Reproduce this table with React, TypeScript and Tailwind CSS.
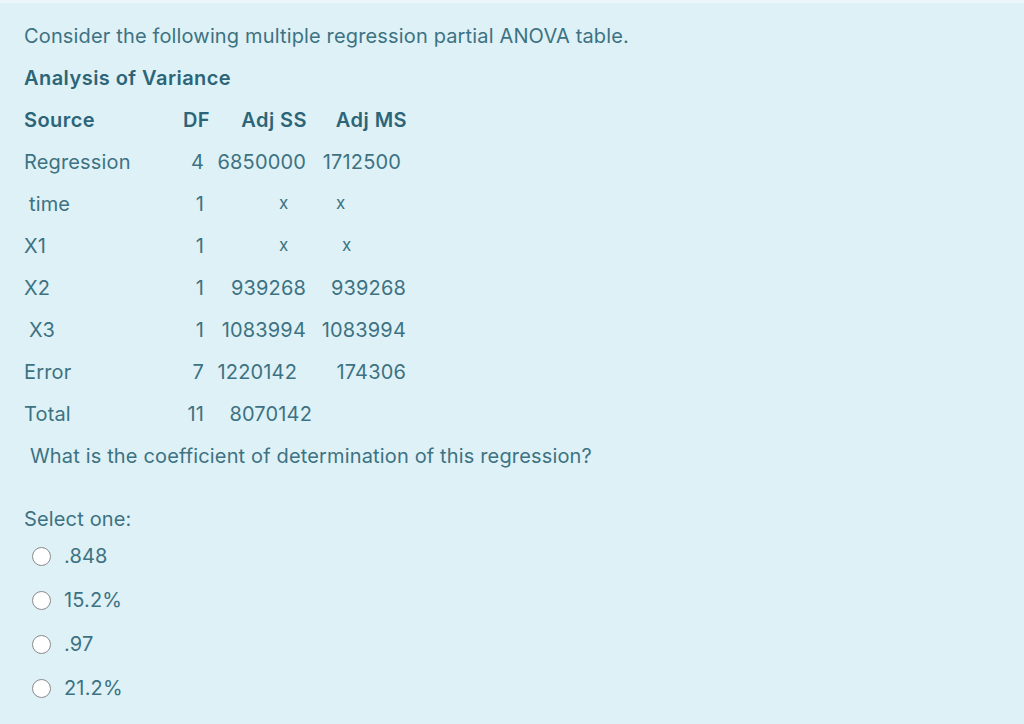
import React from "react";

const Radio = ({ label }: { label: string }) => (
  <div className="flex h-[44px] items-center">
    <span className="ml-[32px] h-[19px] w-[19px] rounded-full border-[1.5px] border-[#8a8a8a] bg-white" />
    <span className="ml-[13px]">{label}</span>
  </div>
);

export default function App() {
  const cell = "flex h-[42px] items-center";
  const bold = " font-semibold tracking-[0.45px] text-[#2c6577]";
  return (
    <div
      className="min-h-[724px] w-[1024px] bg-[#def1f7] text-[20px] tracking-[0.15px] text-[#3d7282]"
      style={{ fontFamily: "Inter, 'Liberation Sans', sans-serif" }}
    >
      <div className="h-[3px] bg-[#eaf6fa]" />
      <div className="pl-[24px] pt-[12px]">
        <div className={cell}>Consider the following multiple regression partial ANOVA table.</div>
        <div className={cell + bold}>Analysis of Variance</div>
        <div className="grid grid-cols-[156px_30px_100px_100px]">
          <div className={cell + bold}>Source</div>
          <div className={cell + " justify-end" + bold}>DF</div>
          <div className={cell + " justify-end pr-[3px]" + bold}>Adj SS</div>
          <div className={cell + " justify-end pr-[3px]" + bold}>Adj MS</div>

          <div className={cell}>Regression</div>
          <div className={cell + " justify-end pr-[6px]"}>4</div>
          <div className={cell + " justify-end pr-[4px]"}>6850000</div>
          <div className={cell + " justify-end pr-[9px]"}>1712500</div>

          <div className={cell + " pl-[5px]"}>time</div>
          <div className={cell + " justify-end pr-[6px]"}>1</div>
          <div className={cell + " pl-[69px] text-[17px]"}>x</div>
          <div className={cell + " pl-[26px] text-[17px]"}>x</div>

          <div className={cell}>X1</div>
          <div className={cell + " justify-end pr-[6px]"}>1</div>
          <div className={cell + " pl-[69px] text-[17px]"}>x</div>
          <div className={cell + " pl-[32px] text-[17px]"}>x</div>

          <div className={cell}>X2</div>
          <div className={cell + " justify-end pr-[6px]"}>1</div>
          <div className={cell + " justify-end pr-[4px]"}>939268</div>
          <div className={cell + " justify-end pr-[4px]"}>939268</div>

          <div className={cell + " pl-[5px]"}>X3</div>
          <div className={cell + " justify-end pr-[6px]"}>1</div>
          <div className={cell + " justify-end pr-[4px]"}>1083994</div>
          <div className={cell + " justify-end pr-[4px]"}>1083994</div>

          <div className={cell}>Error</div>
          <div className={cell + " justify-end pr-[6px]"}>7</div>
          <div className={cell + " justify-end pr-[13px]"}>1220142</div>
          <div className={cell + " justify-end pr-[4px]"}>174306</div>

          <div className={cell}>Total</div>
          <div className={cell + " justify-end pr-[6px]"}>11</div>
          <div className={cell + " justify-end pr-0"}>
            <span className="mr-[-2px]">8070142</span>
          </div>
          <div className={cell} />
        </div>
        <div className={cell + " pl-[6px]"}>What is the coefficient of determination of this regression?</div>
        <div className="h-[21px]" />
        <div className="flex h-[42px] items-center">Select one:</div>
      </div>
      <div className="-mt-[6px]">
        <Radio label=".848" />
        <Radio label="15.2%" />
        <Radio label=".97" />
        <Radio label="21.2%" />
      </div>
    </div>
  );
}
